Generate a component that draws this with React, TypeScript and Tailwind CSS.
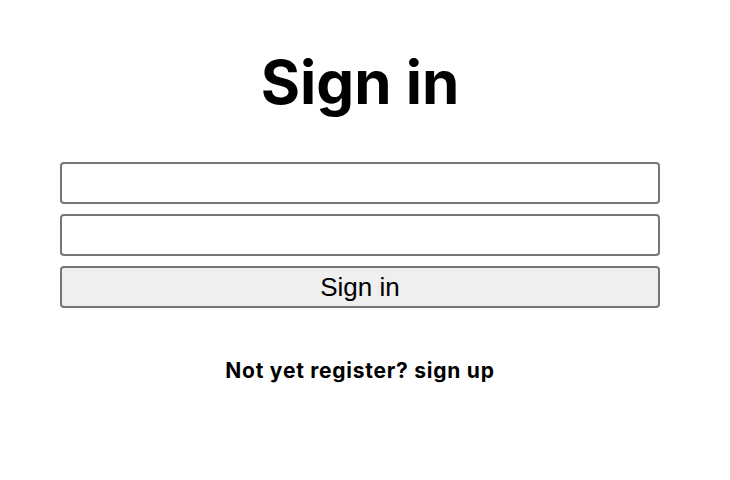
export default function App() {
  return (
    <div className="w-[720px] bg-white font-['Inter',sans-serif] text-black">
      <div className="flex flex-col items-center px-[60px]">
        <h1 className="mt-[44px] text-[60px] font-bold leading-[76px]">Sign in</h1>

        <form className="mt-[42px] flex w-full flex-col gap-[10px]" onSubmit={(e) => e.preventDefault()}>
          <input
            type="text"
            className="h-[42px] w-full rounded-[4px] border-2 border-[#767676] bg-white px-2"
          />
          <input
            type="password"
            className="h-[42px] w-full rounded-[4px] border-2 border-[#767676] bg-white px-2"
          />
          <button
            type="submit"
            className="h-[42px] w-full rounded-[4px] border-2 border-[#767676] bg-[#efefef] font-['Liberation_Sans',Arial,sans-serif] text-[26px] leading-none"
          >
            Sign in
          </button>
        </form>

        <p className="mt-[49px] text-[21px] font-bold leading-[28px] tracking-[0.75px]">
          Not yet register? sign up
        </p>
      </div>
    </div>
  );
}
